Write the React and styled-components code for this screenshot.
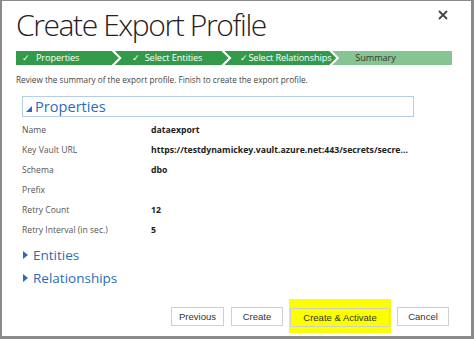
import React from "react";
import styled, { createGlobalStyle } from "styled-components";

const Global = createGlobalStyle`
  html, body { margin: 0; padding: 0; background: #fff; }
  * { box-sizing: border-box; }
`;

const Frame = styled.div`
  width: 474px;
  height: 339px;
  border-style: solid;
  border-color: #8a8a8a;
  border-width: 1px 3px 3px 2px;
  background: #fff;
  font-family: "Open Sans", "Liberation Sans", sans-serif;
  display: flex;
  flex-direction: column;
  padding: 0 19px 0 14px;
`;

const Header = styled.div`
  display: flex;
  align-items: flex-start;
  justify-content: space-between;
  height: 50px;
`;

const Title = styled.h1`
  margin: 4px 0 0 0;
  font-family: "Open Sans", sans-serif;
  font-weight: 300;
  font-size: 30px;
  line-height: 40px;
  color: #222;
  letter-spacing: -1.4px;
`;

const Close = styled.button`
  border: none;
  background: none;
  padding: 0;
  margin: 7px 2px 0 0;
  width: 14px;
  height: 14px;
  display: flex;
  align-items: center;
  justify-content: center;
`;

const Steps = styled.div`
  display: flex;
  height: 14px;
  width: 436px;
`;

const Step = styled.div`
  flex: 1;
  height: 14px;
  margin-left: ${(p) => (p.$first ? "0" : "-4px")};
  background: ${(p) => (p.$done ? "#329a48" : "#86c591")};
  color: ${(p) => (p.$done ? "#fff" : "#333")};
  clip-path: ${(p) =>
    p.$first
      ? "polygon(0 0, calc(100% - 7px) 0, 100% 50%, calc(100% - 7px) 100%, 0 100%)"
      : p.$last
      ? "polygon(0 0, 100% 0, 100% 100%, 0 100%, 7px 50%)"
      : "polygon(0 0, calc(100% - 7px) 0, 100% 50%, calc(100% - 7px) 100%, 0 100%, 7px 50%)"};
  font-size: 9.2px;
  line-height: 14px;
  padding-left: ${(p) => p.$pad}px;
  white-space: nowrap;
  overflow: hidden;
  letter-spacing: -0.1px;
`;

const Check = styled.span`
  margin-right: ${(p) => p.$gap}px;
`;

const Description = styled.p`
  margin: 9px 0 0 0;
  font-size: 8.2px;
  line-height: 12px;
  color: #444;
  white-space: nowrap;
`;

const Section = styled.div`
  margin: 10px 0 0 6px;
  width: 392px;
  height: 21px;
  border: 1px solid #b5cdea;
  display: flex;
  align-items: center;
  gap: 3px;
  padding-left: 3px;
`;

const SectionTitle = styled.span`
  font-size: 14.6px;
  line-height: 20px;
  color: #2b6cb8;
  margin-top: -2px;
`;

const Rows = styled.div`
  display: flex;
  flex-direction: column;
  margin: 3px 0 0 6px;
`;

const Row = styled.div`
  display: flex;
  height: 20px;
  align-items: center;
`;

const Label = styled.div`
  width: 129px;
  font-size: 8.6px;
  color: #555;
  white-space: nowrap;
`;

const Value = styled.div`
  font-size: 8.7px;
  font-weight: 700;
  color: #222;
  white-space: nowrap;
`;

const Collapsed = styled.div`
  display: flex;
  align-items: center;
  gap: 5px;
  margin-left: 7px;
  height: 23px;
  font-size: 13.5px;
  color: #2b6cb8;
`;

const Groups = styled.div`
  display: flex;
  flex-direction: column;
  margin-top: 3px;
`;

const Footer = styled.div`
  display: flex;
  justify-content: flex-end;
  align-items: center;
  gap: 7px;
  margin-top: auto;
  margin-bottom: 3px;
  margin-right: 3px;
`;

const Highlight = styled.div`
  background: #fbff00;
  padding: 5px 1px 6px 1px;
  margin: 0 -1px;
`;

const Button = styled.button`
  height: 19px;
  min-width: ${(p) => p.$w}px;
  border: 1px solid #cfcfcf;
  background: ${(p) => (p.$hl ? "#fbff00" : "#fff")};
  font-family: "Liberation Sans", Arial, sans-serif;
  font-size: 9.5px;
  color: #333;
  padding: 0 7px;
  cursor: pointer;
`;

const Triangle = ({ open }) =>
  open ? (
    <svg width="6" height="6" viewBox="0 0 6 6" style={{ marginTop: 5 }}>
      <polygon points="6,0 6,6 0,6" fill="#2b6cb8" />
    </svg>
  ) : (
    <svg width="5" height="8" viewBox="0 0 5 8">
      <polygon points="0,0 5,4 0,8" fill="#2b6cb8" />
    </svg>
  );

const rows = [
  ["Name", "dataexport"],
  ["Key Vault URL", "https://testdynamickey.vault.azure.net:443/secrets/secre..."],
  ["Schema", "dbo"],
  ["Prefix", ""],
  ["Retry Count", "12"],
  ["Retry Interval (in sec.)", "5"],
];

export default function App() {
  return (
    <>
      <Global />
      <Frame>
        <Header>
          <Title>Create Export Profile</Title>
          <Close aria-label="Close">
            <svg width="10" height="10" viewBox="0 0 10 10">
              <path d="M1 1 L9 9 M9 1 L1 9" stroke="#444" strokeWidth="1.8" />
            </svg>
          </Close>
        </Header>
        <Steps>
          <Step $first $done $pad={6}>
            <Check $gap={6}>✓</Check>Properties
          </Step>
          <Step $done $pad={17}>
            <Check $gap={5}>✓</Check>Select Entities
          </Step>
          <Step $done $pad={15}>
            <Check $gap={1}>✓</Check>Select Relationships
          </Step>
          <Step $last $pad={23}>
            Summary
          </Step>
        </Steps>
        <Description>
          Review the summary of the export profile. Finish to create the export profile.
        </Description>
        <Section>
          <Triangle open />
          <SectionTitle>Properties</SectionTitle>
        </Section>
        <Rows>
          {rows.map(([l, v]) => (
            <Row key={l}>
              <Label>{l}</Label>
              <Value>{v}</Value>
            </Row>
          ))}
        </Rows>
        <Groups>
          <Collapsed>
            <Triangle />
            Entities
          </Collapsed>
          <Collapsed>
            <Triangle />
            Relationships
          </Collapsed>
        </Groups>
        <Footer>
          <Button $w={52}>Previous</Button>
          <Button $w={52}>Create</Button>
          <Highlight>
            <Button $w={100} $hl>Create &amp; Activate</Button>
          </Highlight>
          <Button $w={52}>Cancel</Button>
        </Footer>
      </Frame>
    </>
  );
}
